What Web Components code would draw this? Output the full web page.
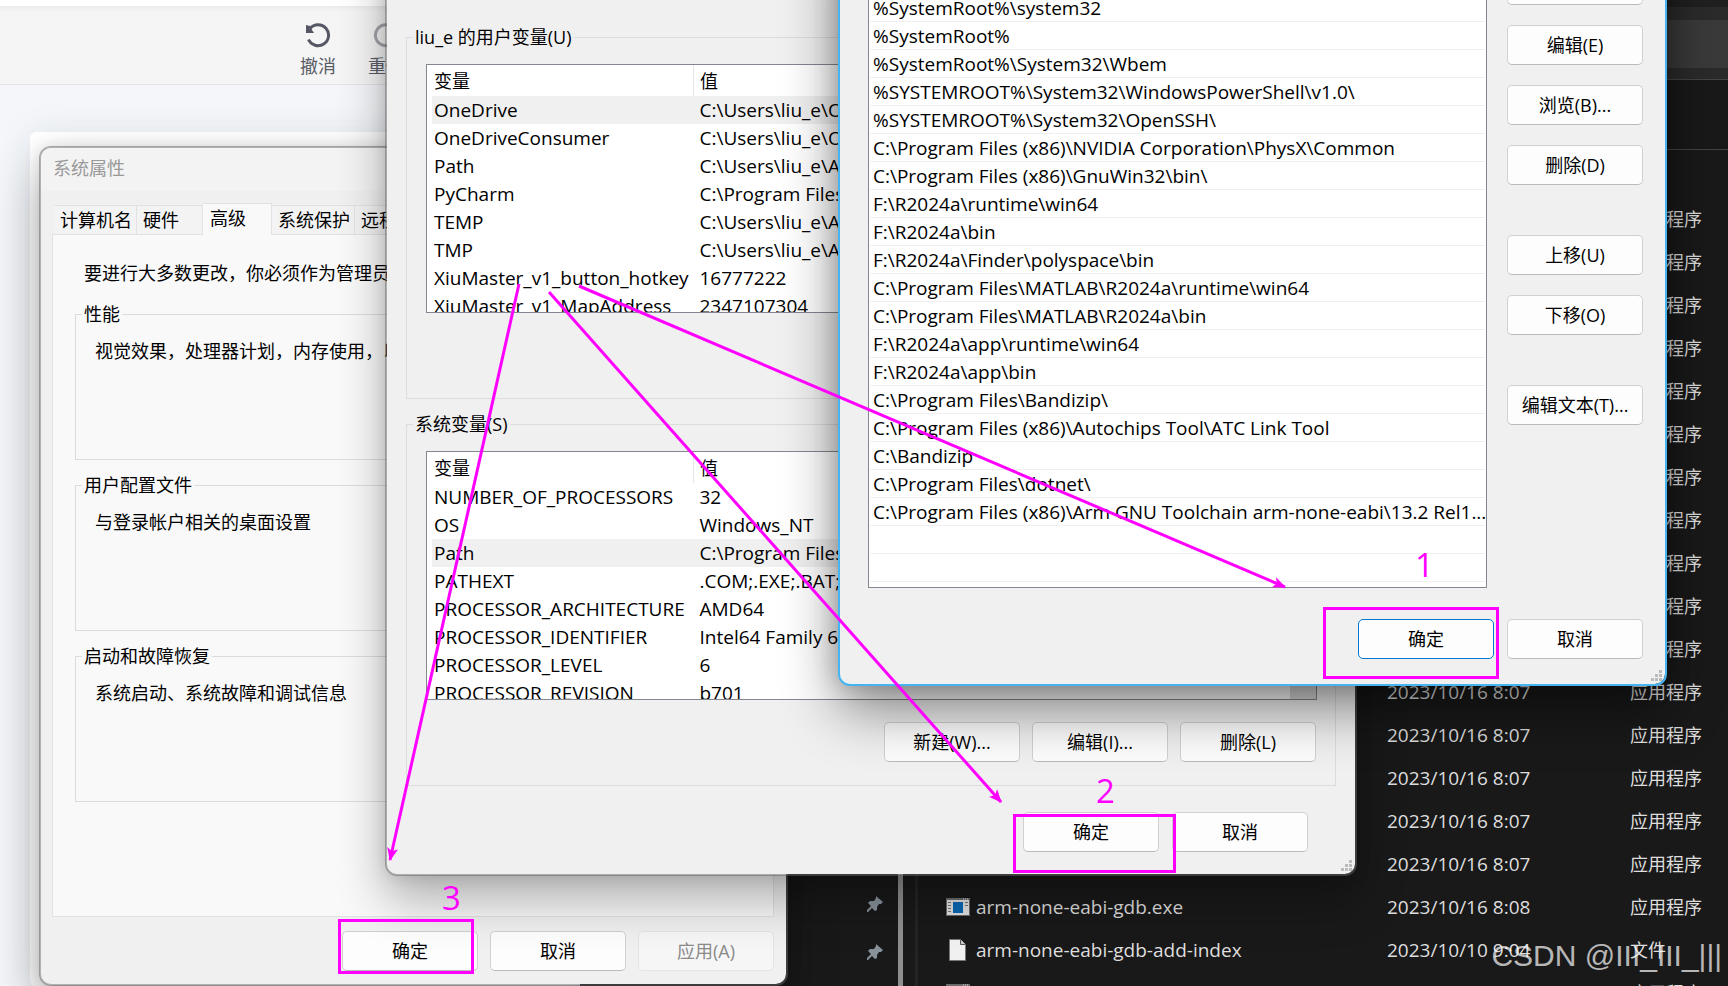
<!DOCTYPE html>
<html lang="zh-CN">
<head>
<meta charset="utf-8">
<title>环境变量</title>
<style>
	html, body {
		margin: 0;
		height: 100%;
	}

	body {
		overflow: hidden;
		font: 18px/24px "Open Sans", "Noto Sans CJK SC", sans-serif;
		color: #000;
	}

	/* every window has its own place on the desktop */
	desk-top > * {
		position: absolute;
	}

	note-editor {
		inset: 0 auto 0 0;
		width: 580px;
	}

	file-explorer {
		inset: 0 0 0 580px;
	}

	#props {
		left: 39px;
		top: 146px;
		width: 749px;
	}

	#env {
		left: 385px;
		top: -80px;
		width: 972px;
	}

	#path {
		left: 838px;
		top: -80px;
		width: 829px;
	}

	water-mark {
		right: 6px;
		bottom: 12px;
	}

	marker-layer {
		inset: 0;
	}

	.hint {
		margin: 0 9px 17px;
		white-space: nowrap;
	}

	.row {
		display: flex;
		justify-content: flex-end;
		gap: 12px;
	}

	#props .row {
		padding-top: 14px;
	}

	#env group-box .row {
		padding: 22px 1px 23px 0;
	}

	#env > .row {
		gap: 13px;
		padding: 26px 28px 0 0;
	}

	#path > .row {
		gap: 13px;
		padding-top: 31px;
	}

	.editor {
		display: flex;
		gap: 20px;
	}

	.editor path-list {
		flex: 1;
		min-width: 0;
	}

	.side {
		display: flex;
		flex-direction: column;
		gap: 20px;
	}

	.side .apart {
		margin-top: 30px;
	}
</style>
</head>
<body>
<desk-top>
	<note-editor></note-editor>
	<file-explorer></file-explorer>

	<win-dialog id="props" caption="系统属性">
		<tab-panel tabs="计算机名,硬件,高级,系统保护,远程" selected="2">
			<p class="hint">要进行大多数更改，你必须作为管理员登录。</p>
			<group-box caption="性能">视觉效果，处理器计划，内存使用，以及虚拟内存</group-box>
			<group-box caption="用户配置文件">与登录帐户相关的桌面设置</group-box>
			<group-box caption="启动和故障恢复">系统启动、系统故障和调试信息</group-box>
		</tab-panel>
		<div class="row">
			<win-button>确定</win-button>
			<win-button>取消</win-button>
			<win-button disabled>应用(A)</win-button>
		</div>
	</win-dialog>

	<win-dialog id="env" caption="环境变量" grip>
		<group-box caption="liu_e 的用户变量(U)">
			<var-list source="user" selected="0"></var-list>
			<div class="row">
				<win-button>新建(N)...</win-button>
				<win-button>编辑(E)...</win-button>
				<win-button>删除(D)</win-button>
			</div>
		</group-box>
		<group-box caption="系统变量(S)">
			<var-list source="system" selected="2"></var-list>
			<div class="row">
				<win-button>新建(W)...</win-button>
				<win-button>编辑(I)...</win-button>
				<win-button>删除(L)</win-button>
			</div>
		</group-box>
		<div class="row">
			<win-button>确定</win-button>
			<win-button>取消</win-button>
		</div>
	</win-dialog>

	<win-dialog id="path" caption="编辑环境变量" active grip>
		<div class="editor">
			<path-list>
				<path-item></path-item>
				<path-item>%SystemRoot%\system32</path-item>
				<path-item>%SystemRoot%</path-item>
				<path-item>%SystemRoot%\System32\Wbem</path-item>
				<path-item>%SYSTEMROOT%\System32\WindowsPowerShell\v1.0\</path-item>
				<path-item>%SYSTEMROOT%\System32\OpenSSH\</path-item>
				<path-item>C:\Program Files (x86)\NVIDIA Corporation\PhysX\Common</path-item>
				<path-item>C:\Program Files (x86)\GnuWin32\bin\</path-item>
				<path-item>F:\R2024a\runtime\win64</path-item>
				<path-item>F:\R2024a\bin</path-item>
				<path-item>F:\R2024a\Finder\polyspace\bin</path-item>
				<path-item>C:\Program Files\MATLAB\R2024a\runtime\win64</path-item>
				<path-item>C:\Program Files\MATLAB\R2024a\bin</path-item>
				<path-item>F:\R2024a\app\runtime\win64</path-item>
				<path-item>F:\R2024a\app\bin</path-item>
				<path-item>C:\Program Files\Bandizip\</path-item>
				<path-item>C:\Program Files (x86)\Autochips Tool\ATC Link Tool</path-item>
				<path-item>C:\Bandizip</path-item>
				<path-item>C:\Program Files\dotnet\</path-item>
				<path-item>C:\Program Files (x86)\Arm GNU Toolchain arm-none-eabi\13.2 Rel1...</path-item>
				<path-item></path-item>
				<path-item></path-item>
			</path-list>
			<div class="side">
				<win-button>新建(N)</win-button>
				<win-button>编辑(E)</win-button>
				<win-button>浏览(B)...</win-button>
				<win-button>删除(D)</win-button>
				<win-button class="apart">上移(U)</win-button>
				<win-button>下移(O)</win-button>
				<win-button class="apart">编辑文本(T)...</win-button>
			</div>
		</div>
		<div class="row">
			<win-button primary>确定</win-button>
			<win-button>取消</win-button>
		</div>
	</win-dialog>

	<water-mark>CSDN @III_III_|||</water-mark>
	<marker-layer></marker-layer>
</desk-top>

<script>
class DeskTop extends HTMLElement {
	constructor() {
		super();
		this.attachShadow({ mode: 'open' });
		this.shadowRoot.innerHTML = `
			<style>
				:host {
					display: block;
					position: relative;
					height: 100vh;
					overflow: hidden;
					background: #191919;
				}
			</style>
			<slot></slot>
		`;
	}
}

class NoteEditor extends HTMLElement {
	constructor() {
		super();
		this.attachShadow({ mode: 'open' });
		this.shadowRoot.innerHTML = `
			<style>
				:host {
					display: flex;
					flex-direction: column;
					overflow: hidden;
					background: #f4f6f9;
					color: #5a5c68;
				}
				.tools {
					display: flex;
					gap: 32px;
					padding: 10px 0 6px 300px;
					border-top: 6px solid #fff;
					border-bottom: 1px solid #e4e4e4;
					background: linear-gradient(#ececec, #f5f5f5 6px);
				}
				button {
					display: flex;
					flex-direction: column;
					align-items: center;
					gap: 6px;
					padding: 6px 0 0;
					border: 0;
					background: none;
					font: inherit;
					color: inherit;
				}
				svg {
					display: block;
					fill: none;
					stroke: #555764;
					stroke-width: 3;
				}
				.off {
					transform: scaleX(-1);
					opacity: .5;
				}
				.sheet {
					flex: 1;
					margin: 47px 0 0 30px;
					border-radius: 6px;
					background: #fff;
					box-shadow: 0 0 36px rgba(40,60,90,.08);
				}
			</style>
			<div class="tools">
				<button>
					<svg width="26" height="26" viewBox="0 0 26 26"><path d="M3.500 17.500A10.500 10.500 0 1 0 5 6.500"/><path d="M1 3l4 1 2 4 2 3H1z" fill="#555764" stroke="none"/></svg>
					撤消
				</button>
				<button>
					<svg class="off" width="26" height="26" viewBox="0 0 26 26"><path d="M3.500 17.500A10.500 10.500 0 1 0 5 6.500"/><path d="M1 3l4 1 2 4 2 3H1z" fill="#555764" stroke="none"/></svg>
					重做
				</button>
			</div>
			<div class="sheet"></div>
		`;
	}
}

class FileExplorer extends HTMLElement {
	#files = [
		...Array(16).fill(['', '', '2023/10/16 8:07', '应用程序']),
		['exe', 'arm-none-eabi-gdb.exe', '2023/10/16 8:08', '应用程序'],
		['doc', 'arm-none-eabi-gdb-add-index', '2023/10/10 9:04', '文件'],
		['exe', '', '', '应用程序']
	];
	#icons = {
		exe: `<svg width="24" height="18" viewBox="0 0 24 18"><path fill="#6b6b6b" d="M0 0h24v18H0z"/><path fill="#e2e2e2" d="M1 2h22v15H1z"/><path fill="#0a68b4" d="M7 4h10v11H7z"/><path stroke="#777" d="M2 4.500h3M2 7.500h3M2 10.500h3M2 13.500h3M19 4.500h3M19 7.500h3"/><path stroke="#ddd" d="M17 1h1M19 1h1M21 1h1"/></svg>`,
		doc: `<svg width="24" height="22" viewBox="0 0 24 22"><path d="M3.500.5h11l5 5v16h-16z" fill="#f0f0f0" stroke="#777"/><path d="M14.500.5v5h5" fill="#ccc" stroke="#555"/></svg>`
	};
	constructor() {
		super();
		this.attachShadow({ mode: 'open' });
		const pin = `<svg width="16" height="16" viewBox="0 0 16 16"><path fill="#87919a" d="M9 0l7 6-2 2h-2l-2 3v3l-2 1-3-3-4 4H0v-2l4-4-3-3 2-2 4 0 2-3z"/></svg>`;
		this.shadowRoot.innerHTML = `
			<style>
				:host {
					display: flex;
					flex-direction: column;
					overflow: hidden;
					background: #191919;
					color: #dedede;
					font-size: 19px;
				}
				.address {
					height: 48px;
					border: solid #2b2b2b;
					border-width: 13px 0 11px;
					background: #3a3a3a;
				}
				.top {
					padding-top: 7px;
					background: #202020;
					border-bottom: 1px solid #444;
				}
				.commands {
					height: 69px;
					border-bottom: 1px solid #444;
				}
				.main {
					flex: 1;
					display: flex;
					min-height: 0;
				}
				nav {
					display: flex;
					flex-direction: column;
					justify-content: flex-end;
					align-items: flex-end;
					gap: 32px;
					width: 318px;
					padding: 0 15px 26px 0;
					box-sizing: border-box;
				}
				nav svg {
					display: block;
				}
				.bar {
					width: 5px;
					margin-right: 12px;
					background: #8f8f8f;
				}
				.files {
					flex: 1;
					padding: 47px 0 0 28px;
					border-left: 3px solid #242424;
				}
				table {
					width: 100%;
					table-layout: fixed;
					border-collapse: collapse;
				}
				td {
					height: 43px;
					padding: 0;
					white-space: nowrap;
				}
				td:first-child {
					width: 441px;
				}
				td:nth-child(2) {
					width: 243px;
				}
				td:last-child {
					font-size: 18px;
				}
				td div {
					display: flex;
					align-items: center;
					gap: 6px;
				}
			</style>
			<div class="top"><div class="address"></div></div>
			<div class="commands"></div>
			<div class="main">
				<nav>${pin}${pin}</nav>
				<div class="bar"></div>
				<div class="files"><table><tbody></tbody></table></div>
			</div>
		`;
	}

	connectedCallback() {
		this.shadowRoot.querySelector('tbody').innerHTML = this.#files.map(([icon, name, date, type]) =>
			`<tr><td><div>${this.#icons[icon] || ''}${name}</div></td><td>${date}</td><td>${type}</td></tr>`
		).join('');
	}
}

class WinDialog extends HTMLElement {
	constructor() {
		super();
		this.attachShadow({ mode: 'open' });
		this.shadowRoot.innerHTML = `
			<style>
				:host {
					display: block;
					box-sizing: border-box;
					border: 2px solid rgba(100,100,100,.5);
					border-radius: 12px;
					background: #f0f0f0;
					background-clip: padding-box;
					box-shadow: 0 24px 48px rgba(0,0,0,.3), 0 0 16px rgba(0,0,0,.12);
				}
				:host([active]) {
					border-color: #45b4f0;
					box-shadow: 0 24px 56px rgba(0,0,0,.45), 0 0 24px rgba(0,0,0,.2);
				}
				header {
					height: 43px;
					padding-left: 12px;
					border-radius: 10px 10px 0 0;
					background: #f3f3f3;
					color: #999;
					line-height: 41px;
				}
				:host(#props) .body {
					padding: 12px 12px 13px 11px;
				}
				:host(#env) .body {
					padding: 60px 19px 22px;
				}
				:host(#path) .body {
					padding: 0 22px 25px 28px;
				}
				svg {
					display: none;
					position: absolute;
					right: 2px;
					bottom: 2px;
				}
				:host([grip]) svg {
					display: block;
				}
			</style>
			<header></header>
			<div class="body"><slot></slot></div>
			<svg width="12" height="12" viewBox="0 0 12 12" fill="#bbb"><path d="M8 0h3v3H8zM4 4h3v3H4zM8 4h3v3H8zM0 8h3v3H0zM4 8h3v3H4zM8 8h3v3H8z"/></svg>
		`;
	}

	connectedCallback() {
		this.shadowRoot.querySelector('header').textContent = this.getAttribute('caption');
	}
}

class TabPanel extends HTMLElement {
	constructor() {
		super();
		this.attachShadow({ mode: 'open' });
		this.shadowRoot.innerHTML = `
			<style>
				:host {
					display: block;
				}
				.tabs {
					display: flex;
					align-items: flex-end;
					padding-left: 2px;
				}
				button {
					box-sizing: border-box;
					height: 29px;
					min-width: 66px;
					padding: 0 4px 0 6px;
					border: 1px solid #e2e2e2;
					border-width: 1px 1px 0 0;
					background: #f3f3f3;
					font: inherit;
					color: inherit;
					text-align: left;
				}
				button.on {
					position: relative;
					height: 32px;
					min-width: 69px;
					margin-bottom: -1px;
					padding: 0 7px 4px;
					background: #f9f9f9;
				}
				.panel {
					padding: 26px 22px 114px;
					border: 1px solid #e2e2e2;
					background: #f9f9f9;
				}
			</style>
			<div class="tabs" role="tablist"></div>
			<div class="panel"><slot></slot></div>
		`;
	}

	connectedCallback() {
		const selected = Number(this.getAttribute('selected'));
		const tabs = this.shadowRoot.querySelector('.tabs');
		this.getAttribute('tabs').split(',').forEach((name, i) => {
			const tab = document.createElement('button');
			tab.setAttribute('role', 'tab');
			tab.textContent = name;
			if (i === selected) tab.className = 'on';
			tabs.appendChild(tab);
		});
	}
}

class GroupBox extends HTMLElement {
	constructor() {
		super();
		this.attachShadow({ mode: 'open' });
		this.shadowRoot.innerHTML = `
			<style>
				:host {
					display: block;
					margin-bottom: 13px;
				}
				:host(:last-of-type) {
					margin-bottom: 0;
				}
				fieldset {
					box-sizing: border-box;
					min-height: 158px;
					margin: 0;
					padding: 13px 18px 0 6px;
					border: 1px solid #dcdcdc;
				}
				legend {
					padding: 0 2px;
				}
				.body {
					padding-left: 13px;
				}
			</style>
			<fieldset>
				<legend></legend>
				<div class="body"><slot></slot></div>
			</fieldset>
		`;
	}

	connectedCallback() {
		this.shadowRoot.querySelector('legend').textContent = this.getAttribute('caption');
	}
}

class VarList extends HTMLElement {
	#sources = {
		user: [
			['OneDrive', 'C:\\Users\\liu_e\\OneDrive'],
			['OneDriveConsumer', 'C:\\Users\\liu_e\\OneDrive'],
			['Path', 'C:\\Users\\liu_e\\AppData'],
			['PyCharm', 'C:\\Program Files'],
			['TEMP', 'C:\\Users\\liu_e\\AppData'],
			['TMP', 'C:\\Users\\liu_e\\AppData'],
			['XiuMaster_v1_button_hotkey', '16777222'],
			['XiuMaster_v1_MapAddress', '2347107304']
		],
		system: [
			['NUMBER_OF_PROCESSORS', '32'],
			['OS', 'Windows_NT'],
			['Path', 'C:\\Program Files'],
			['PATHEXT', '.COM;.EXE;.BAT;.CMD'],
			['PROCESSOR_ARCHITECTURE', 'AMD64'],
			['PROCESSOR_IDENTIFIER', 'Intel64 Family 6'],
			['PROCESSOR_LEVEL', '6'],
			['PROCESSOR_REVISION', 'b701']
		]
	};
	constructor() {
		super();
		this.attachShadow({ mode: 'open' });
		this.shadowRoot.innerHTML = `
			<style>
				:host {
					display: flex;
					box-sizing: border-box;
					height: 249px;
					margin-top: 2px;
					border: 1px solid #828790;
					background: #fff;
					overflow: hidden;
				}
				table {
					flex: 1;
					margin-left: 5px;
					table-layout: fixed;
					border-collapse: collapse;
					font-size: 19px;
				}
				th {
					height: 31px;
					padding: 0 0 0 2px;
					font-size: 18px;
					font-weight: normal;
					text-align: left;
				}
				th:first-child {
					width: 259px;
					border-right: 1px solid #e5e5e5;
				}
				th + th, td + td {
					padding-left: 6px;
				}
				td {
					height: 28px;
					padding: 0 0 0 2px;
					white-space: nowrap;
				}
				tr.on {
					background: #f0f0f0;
				}
				.scroll {
					width: 26px;
					background: #dcdcdc;
				}
			</style>
			<table>
				<thead><tr><th>变量</th><th>值</th></tr></thead>
				<tbody></tbody>
			</table>
			<div class="scroll"></div>
		`;
	}

	connectedCallback() {
		const selected = Number(this.getAttribute('selected'));
		this.shadowRoot.querySelector('tbody').innerHTML = this.#sources[this.getAttribute('source')].map(([name, value], i) =>
			`<tr${i === selected ? ' class="on"' : ''}><td>${name}</td><td>${value}</td></tr>`
		).join('');
	}
}

class PathList extends HTMLElement {
	constructor() {
		super();
		this.attachShadow({ mode: 'open' });
		this.shadowRoot.innerHTML = `
			<style>
				:host {
					display: block;
					padding: 0 1px 5px;
					border: 1px solid #828790;
					background: #fff;
					font-size: 19px;
				}
			</style>
			<slot></slot>
		`;
	}
}

class PathItem extends HTMLElement {
	constructor() {
		super();
		this.attachShadow({ mode: 'open' });
		this.shadowRoot.innerHTML = `
			<style>
				:host {
					display: block;
					box-sizing: border-box;
					height: 28px;
					padding-left: 3px;
					border-bottom: 1px solid #efefef;
					line-height: 28px;
					white-space: nowrap;
				}
			</style>
			<slot></slot>
		`;
	}
}

class WinButton extends HTMLElement {
	constructor() {
		super();
		this.attachShadow({ mode: 'open' });
		this.shadowRoot.innerHTML = `
			<style>
				:host {
					display: block;
				}
				button {
					display: block;
					width: 136px;
					height: 40px;
					padding: 0;
					border: 1px solid #d0d0d0;
					border-bottom-color: #bababa;
					border-radius: 5px;
					background: #fdfdfd;
					font: inherit;
					color: inherit;
				}
				:host([primary]) button {
					border-color: #0078d4;
				}
				button:disabled {
					border-color: #e4e4e4;
					background: #f6f6f6;
					color: #8a8a8a;
				}
			</style>
			<button><slot></slot></button>
		`;
	}

	connectedCallback() {
		this.shadowRoot.querySelector('button').disabled = this.hasAttribute('disabled');
	}
}

class WaterMark extends HTMLElement {
	constructor() {
		super();
		this.attachShadow({ mode: 'open' });
		this.shadowRoot.innerHTML = `
			<style>
				:host {
					font: 30px/36px "Liberation Sans", sans-serif;
					color: rgba(255,255,255,.7);
					white-space: nowrap;
				}
			</style>
			<slot></slot>
		`;
	}
}

// arrows, frames and step numbers drawn over the windows
class MarkerLayer extends HTMLElement {
	constructor() {
		super();
		this.attachShadow({ mode: 'open' });
		this.shadowRoot.innerHTML = `
			<style>
				:host {
					display: block;
					pointer-events: none;
				}
				svg {
					display: block;
					width: 100%;
					height: 100%;
				}
				text {
					font: 33px "Open Sans", sans-serif;
					fill: #f0f;
				}
			</style>
			<svg>
				<defs>
					<marker id="tip" markerUnits="userSpaceOnUse" markerWidth="14" markerHeight="12" refX="12" refY="6" orient="auto">
						<path d="M0 0.500L13 6L0 11.500L3 6z" fill="#f0f"/>
					</marker>
				</defs>
				<g fill="none" stroke="#f0f" stroke-width="3">
					<path d="M519 284L390 860" marker-end="url(#tip)"/>
					<path d="M549 292L1001 802" marker-end="url(#tip)"/>
					<path d="M579 286L1285 587" marker-end="url(#tip)"/>
					<rect x="1324.500" y="608.500" width="173" height="69"/>
					<rect x="1014.500" y="815.500" width="160" height="56"/>
					<rect x="339.500" y="920.500" width="133" height="52"/>
				</g>
				<text x="1415" y="577">1</text>
				<text x="1096" y="803">2</text>
				<text x="442" y="910">3</text>
			</svg>
		`;
	}
}

customElements.define('desk-top', DeskTop);
customElements.define('note-editor', NoteEditor);
customElements.define('file-explorer', FileExplorer);
customElements.define('win-dialog', WinDialog);
customElements.define('tab-panel', TabPanel);
customElements.define('group-box', GroupBox);
customElements.define('var-list', VarList);
customElements.define('path-list', PathList);
customElements.define('path-item', PathItem);
customElements.define('win-button', WinButton);
customElements.define('water-mark', WaterMark);
customElements.define('marker-layer', MarkerLayer);
</script>
</body>
</html>
